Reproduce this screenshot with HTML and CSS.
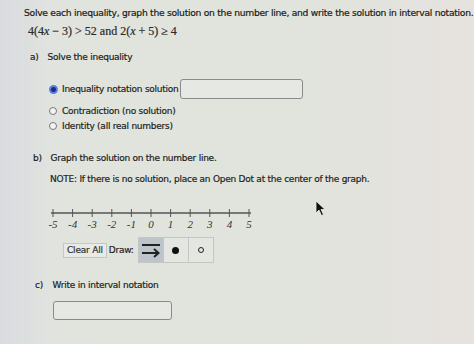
FILE: index.html
```html
<!DOCTYPE html>
<html lang="en">
<head>
  <meta charset="UTF-8">
  <title>Inequality</title>
  <link rel="stylesheet" href="styles.css">
</head>
<body>
  <div class="page">
    <p class="intro">Solve each inequality, graph the solution on the number line, and write the solution in interval notation.</p>
    <p class="math">4(4<i>x</i> &minus; 3) &gt; 52 and 2(<i>x</i> + 5) &ge; 4</p>

    <div class="part part-a">
      <div class="part-head"><span class="tag">a)</span> Solve the inequality</div>
      <div class="choices">
        <label class="choice"><span class="radio on"></span>Inequality notation solution<span class="answer wide"></span></label>
        <label class="choice"><span class="radio"></span>Contradiction (no solution)</label>
        <label class="choice"><span class="radio"></span>Identity (all real numbers)</label>
      </div>
    </div>

    <div class="part part-b">
      <div class="part-head"><span class="tag">b)</span> Graph the solution on the number line.</div>
      <p class="note">NOTE: If there is no solution, place an Open Dot at the center of the graph.</p>
      <svg class="numline" width="210" height="26" viewBox="0 0 210 26">
        <line x1="3" y1="7" x2="203" y2="7" stroke="#555" stroke-width="1.6"/>
        <g stroke="#555" stroke-width="1">
          <line x1="5" y1="3" x2="5" y2="11"/><line x1="24.6" y1="3" x2="24.6" y2="11"/>
          <line x1="44.2" y1="3" x2="44.2" y2="11"/><line x1="63.8" y1="3" x2="63.8" y2="11"/>
          <line x1="83.4" y1="3" x2="83.4" y2="11"/><line x1="103" y1="3" x2="103" y2="11"/>
          <line x1="122.6" y1="3" x2="122.6" y2="11"/><line x1="142.2" y1="3" x2="142.2" y2="11"/>
          <line x1="161.8" y1="3" x2="161.8" y2="11"/><line x1="181.4" y1="3" x2="181.4" y2="11"/>
          <line x1="201" y1="3" x2="201" y2="11"/>
        </g>
        <g class="ticks" font-size="11" text-anchor="middle" fill="#333">
          <text x="5" y="22">-5</text><text x="24.6" y="22">-4</text><text x="44.2" y="22">-3</text>
          <text x="63.8" y="22">-2</text><text x="83.4" y="22">-1</text><text x="103" y="22">0</text>
          <text x="122.6" y="22">1</text><text x="142.2" y="22">2</text><text x="161.8" y="22">3</text>
          <text x="181.4" y="22">4</text><text x="201" y="22">5</text>
        </g>
      </svg>
      <div class="tools">
        <button class="clear">Clear All</button>
        <span class="draw-label">Draw:</span>
        <div class="draw-set">
          <div class="draw-btn active">
            <svg width="20" height="18" viewBox="0 0 20 18"><line x1="1" y1="4" x2="19" y2="4" stroke="#222" stroke-width="2"/><line x1="1" y1="12" x2="17" y2="12" stroke="#222" stroke-width="2"/><path d="M13 8 L17.5 12 L13 16" fill="none" stroke="#222" stroke-width="2"/></svg>
          </div>
          <div class="draw-btn"><span class="dot"></span></div>
          <div class="draw-btn"><span class="dot open"></span></div>
        </div>
      </div>
    </div>

    <div class="part part-c">
      <div class="part-head"><span class="tag">c)</span> Write in interval notation</div>
      <span class="answer short"></span>
    </div>
  </div>
  <svg class="cursor" width="12" height="17" viewBox="0 0 12 17"><path d="M1 1 L1 13 L4 10 L6.5 15.5 L8.5 14.5 L6 9.5 L10 9.5 Z" fill="#111" stroke="#eee" stroke-width="0.8"/></svg>
</body>
</html>
```

FILE: styles.css
```css
body {
  margin: 0;
  background: linear-gradient(90deg, #d9dbe0 0%, #e1e4de 12%, #e0e4dc 60%, #e6e2df 100%);
  min-height: 344px;
  font-family: "DejaVu Sans", Verdana, sans-serif;
  color: #1f1f1f;
  -webkit-text-stroke: 0.2px;
}
.page { padding: 7px 0 0 24px; font-size: 9px; letter-spacing: -0.25px; }

.intro { margin: 0; font-size: 9.2px; letter-spacing: -0.28px; color: #1a1a1a; white-space: nowrap; }
.math {
  margin: 6px 0 0 4px;
  font-family: "Liberation Serif", "DejaVu Serif", serif;
  font-size: 12px;
  letter-spacing: 0;
  color: #2a2a2a;
}
.math i { font-style: italic; }

.part-head { color: #222; }
.tag { display: inline-block; width: 15px; }

.part-a { margin: 13px 0 0 6px; }
.choices { margin: 17px 0 0 19px; }
.choice { display: flex; align-items: center; height: 15px; }
.choice:first-child { height: 20px; margin-bottom: 4px; }
.radio {
  width: 8px; height: 8px;
  border: 1px solid #777;
  border-radius: 50%;
  background: #f4f4f4;
  margin-right: 5px;
  box-sizing: border-box;
}
.radio.on { border: 2.5px solid #5b7fe0; background: #1d2f7a; width: 9px; height: 9px; margin-right: 4px; }

.answer {
  display: inline-block;
  border: 1px solid #8a8a8a;
  border-radius: 3px;
  background: #e6e8e3;
  box-sizing: border-box;
}
.answer.wide { width: 123px; height: 20px; margin-left: 1px; }
.answer.short { width: 119px; height: 19px; margin: 11px 0 0 18px; }

.part-b { margin: 20px 0 0 9px; }
.note { margin: 11px 0 0 17px; }
.numline { display: block; margin: 22px 0 0 15px; font-family: "Liberation Serif", serif; font-style: italic; letter-spacing: 0; }

.tools { display: flex; align-items: center; margin: 5px 0 0 30px; }
.clear {
  font-family: inherit;
  font-size: 9px;
  letter-spacing: -0.2px;
  color: #333;
  background: #e9eae6;
  border: 1px solid #c6c6c2;
  padding: 0 3px;
  height: 15px;
  margin-right: 2px;
}
.draw-label { margin-right: 4px; }
.draw-set { display: flex; border: 1px solid #c4c6c2; }
.draw-btn {
  width: 24px; height: 24px;
  display: flex; align-items: center; justify-content: center;
  border-left: 1px solid #c4c6c2;
  background: #e4e6e1;
}
.draw-btn:first-child { border-left: none; background: #bcc5cb; }
.dot { width: 7px; height: 7px; border-radius: 50%; background: #111; }
.dot.open { width: 4px; height: 4px; background: none; border: 1.5px solid #222; }

.part-c { margin: 17px 0 0 11px; }

.cursor { position: absolute; left: 315px; top: 200px; }
```
